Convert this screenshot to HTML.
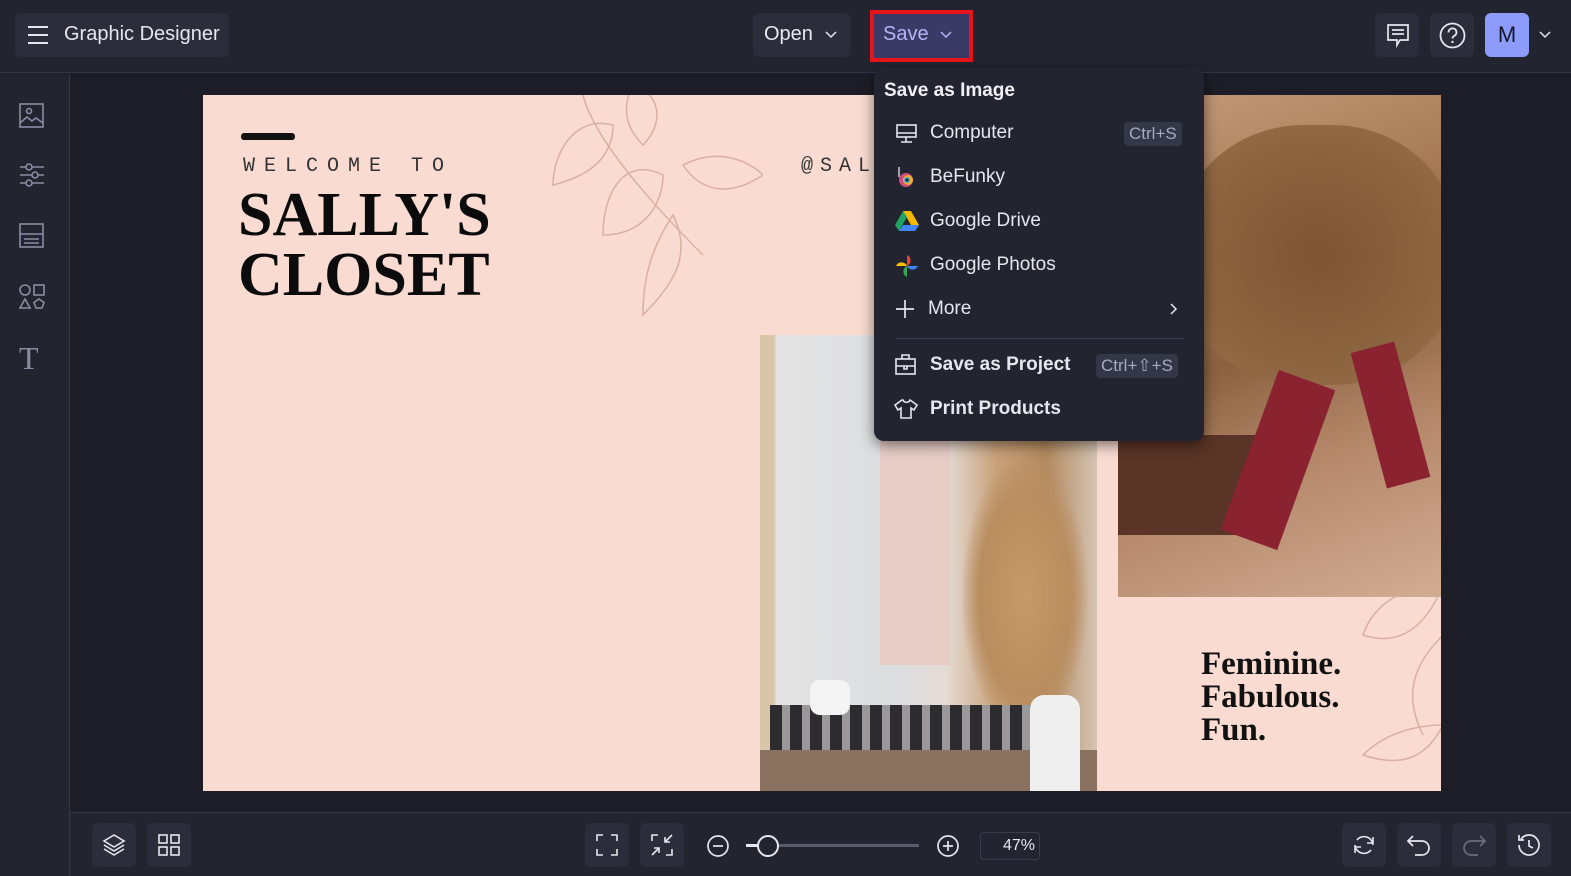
<!DOCTYPE html>
<html><head><meta charset="utf-8"><style>
*{margin:0;padding:0;box-sizing:border-box}
body{width:1571px;height:876px;background:#1c1d26;font-family:"Liberation Sans",sans-serif;position:relative;overflow:hidden;color:#e8e9f0}
.abs{position:absolute}
.top{left:0;top:0;width:1571px;height:73px;background:#22242f;border-bottom:1px solid #33354a}
.btn{position:absolute;background:#2b2d3a;border-radius:6px}
.side{left:0;top:74px;width:70px;height:802px;background:#22242f;border-right:1px solid #33354a}
.bottom{left:70px;top:812px;width:1501px;height:64px;background:#22242f;border-top:1px solid #33354a}
svg{position:absolute}
.menu{left:874px;top:68px;width:330px;height:373px;background:#22242f;border-radius:10px;box-shadow:0 4px 14px rgba(0,0,0,.5)}
.mi{position:absolute;left:56px;font-size:19px;color:#e6e7ee}
.kbd{position:absolute;background:#343747;color:#a8abbd;font-size:17px;border-radius:4px;padding:2px 5px}
</style></head><body>
<div class="abs top"></div>
<div class="btn" style="left:15px;top:13px;width:214px;height:44px"></div>
<svg style="left:27px;top:24px" width="22" height="22"><path d="M1 3h20M1 11h20M1 19h20" stroke="#e6e7ee" stroke-width="2"/></svg>
<div class="abs" style="left:64px;top:23px;font-size:20px;color:#e6e7ee">Graphic Designer</div>
<div class="btn" style="left:753px;top:13px;width:98px;height:44px"></div>
<div class="abs" style="left:764px;top:23px;font-size:20px">Open</div>
<svg style="left:825px;top:31px" width="12" height="8"><path d="M1 1l5 5 5-5" stroke="#e6e7ee" fill="none" stroke-width="1.5"/></svg>
<div class="abs" style="left:870px;top:10px;width:103px;height:52px;border:4px solid #e8141b;background:#3b3a66"></div>
<div class="abs" style="left:883px;top:23px;font-size:20px;color:#b3b6f5">Save</div>
<svg style="left:940px;top:31px" width="12" height="8"><path d="M1 1l5 5 5-5" stroke="#b3b6f5" fill="none" stroke-width="1.5"/></svg>
<div class="btn" style="left:1375px;top:13px;width:44px;height:44px"></div>
<svg style="left:1386px;top:23px" width="24" height="26"><path d="M2 2h20v15h-8l-3 5v-5H2z M6 7h12M6 11h12" stroke="#e6e7ee" fill="none" stroke-width="1.7"/></svg>
<div class="btn" style="left:1430px;top:13px;width:44px;height:44px"></div>
<svg style="left:1439px;top:22px" width="27" height="27"><circle cx="13.5" cy="13.5" r="12" stroke="#e6e7ee" fill="none" stroke-width="1.8"/><path d="M9.5 10.5a4 4 0 1 1 5.5 3.5c-1 .5-1.5 1.2-1.5 2.5" stroke="#e6e7ee" fill="none" stroke-width="1.8"/><circle cx="13.5" cy="20" r="1.2" fill="#e6e7ee"/></svg>
<div class="abs" style="left:1485px;top:13px;width:44px;height:44px;background:#8d9cfb;border-radius:6px;color:#16182a;font-size:22px;text-align:center;line-height:44px">M</div>
<svg style="left:1539px;top:31px" width="12" height="8"><path d="M1 1l5 5 5-5" stroke="#e6e7ee" fill="none" stroke-width="1.5"/></svg>

<div class="abs side"></div>
<svg style="left:19px;top:103px" width="26" height="26" fill="none" stroke="#8a8ca4" stroke-width="1.6"><rect x="1" y="1" width="23" height="23"/><circle cx="10" cy="8" r="2.5"/><path d="M1 20l7-6 5 4 4-3 7 5"/></svg>
<svg style="left:19px;top:162px" width="26" height="26" fill="none" stroke="#8a8ca4" stroke-width="1.6"><path d="M1 5h24M1 13h24M1 21h24"/><circle cx="10" cy="5" r="3" fill="#22242f"/><circle cx="16" cy="13" r="3" fill="#22242f"/><circle cx="10" cy="21" r="3" fill="#22242f"/></svg>
<svg style="left:19px;top:223px" width="26" height="26" fill="none" stroke="#8a8ca4" stroke-width="1.6"><rect x="1" y="1" width="23" height="23"/><path d="M1 11h23M5 16h15M5 20h15"/></svg>
<svg style="left:18px;top:283px" width="28" height="28" fill="none" stroke="#8a8ca4" stroke-width="1.6"><circle cx="7" cy="7" r="5"/><rect x="16" y="2" width="10" height="10"/><path d="M2 25l5-9 5 9z M21 16l5 3.5-2 5.5h-6l-2-5.5z"/></svg>
<div class="abs" style="left:19px;top:340px;font-family:'Liberation Serif',serif;font-size:32px;color:#8a8ca4;font-weight:300">T</div>

<!-- canvas -->
<div class="abs" style="left:203px;top:95px;width:1238px;height:696px;background:#f9dbd1;overflow:hidden">
 <svg style="left:320px;top:0" width="240" height="230" fill="none" stroke="#d9afa3" stroke-width="1.5"><path d="M60 0c10 40 60 100 120 160 M90 30c-40 -10-60 30-60 60 40-10 60-30 60-60z M140 80c-40-20-60 20-60 60 40 0 60-30 60-60z M160 70c40-20 70 0 80 10-30 20-60 20-80-10z M150 120c20 40 0 70-30 100 0-40 10-70 30-100z M110 -10c30 10 30 40 10 60-20-20-20-40-10-60z"/></svg>
 <svg style="left:1140px;top:480px" width="100" height="220" fill="none" stroke="#d9afa3" stroke-width="1.5"><path d="M100 10c-40 0-70 20-80 50 30 10 60 0 80-50z M100 150c-30 0-60 10-80 30 30 10 60 10 80-30z M100 60c-30 30-40 60-20 100"/></svg>
 <div class="abs" style="left:38px;top:38px;width:54px;height:7px;background:#111;border-radius:3px"></div>
 <div class="abs" style="left:40px;top:60px;font-family:'Liberation Mono',monospace;font-size:20px;letter-spacing:9px;color:#333">WELCOME TO</div>
 <div class="abs" style="left:598px;top:60px;font-family:'Liberation Mono',monospace;font-size:20px;letter-spacing:7px;color:#333">@SALLY</div>
 <div class="abs" style="left:35px;top:90px;font-family:'Liberation Serif',serif;font-weight:bold;font-size:62px;line-height:60px;color:#0b0b0b">SALLY'S<br>CLOSET</div>
 <div class="abs" style="left:557px;top:240px;width:337px;height:456px;background:linear-gradient(90deg,#d9c6a8 0,#d9c6a8 4%,#e4e4e4 5%,#dcdde0 40%,#e6dcd6 55%,#c9a27a 70%,#b38a60 85%,#d5c4b4 100%)">
  <div class="abs" style="left:120px;top:90px;width:70px;height:240px;background:#e8cbc3;opacity:.9"></div>
  <div class="abs" style="left:200px;top:120px;width:130px;height:280px;background:radial-gradient(ellipse at center,#c79a68,#b98d5f 50%,transparent 70%)"></div>
  <div class="abs" style="left:10px;top:370px;width:280px;height:45px;background:repeating-linear-gradient(90deg,#2c2c2e 0 12px,#9a9898 12px 20px)"></div>
  <div class="abs" style="left:50px;top:345px;width:40px;height:35px;background:#f4f4f4;border-radius:10px"></div>
  <div class="abs" style="left:0;top:415px;width:337px;height:41px;background:#8b7160"></div>
  <div class="abs" style="left:270px;top:360px;width:50px;height:96px;background:#efefef;border-radius:14px 14px 0 0"></div>
 </div>
 <div class="abs" style="left:915px;top:0;width:323px;height:502px;background:linear-gradient(160deg,#c79c7c 0%,#a57a55 30%,#8a6240 50%,#b58769 70%,#d1ad94 100%);overflow:hidden">
  <div class="abs" style="left:60px;top:30px;width:280px;height:260px;border-radius:45%;background:radial-gradient(ellipse,#7d5533,#8d6440 60%,#9c7350)"></div>
  <div class="abs" style="left:0;top:340px;width:140px;height:100px;background:#5a3426"></div>
  <div class="abs" style="left:130px;top:280px;width:60px;height:170px;background:#8a2230;transform:rotate(20deg)"></div>
  <div class="abs" style="left:250px;top:250px;width:45px;height:140px;background:#8a2230;transform:rotate(-15deg)"></div>
 </div>
 <div class="abs" style="left:998px;top:553px;font-family:'Liberation Serif',serif;font-weight:bold;font-size:33px;line-height:33px;color:#111">Feminine.<br>Fabulous.<br>Fun.</div>
</div>

<!-- menu -->
<div class="abs menu">
 <div class="abs" style="left:10px;top:12px;font-size:19px;font-weight:bold;color:#f0f0f5">Save as Image</div>
 <svg style="left:22px;top:55px" width="22" height="22" fill="none" stroke="#e6e7ee" stroke-width="1.6"><rect x="1" y="2" width="19" height="12"/><path d="M1 10h19M10 14v5M5 19h11"/></svg>
 <div class="mi" style="top:54px">Computer</div><div class="kbd" style="left:250px;top:54px">Ctrl+S</div>
 <svg style="left:22px;top:99px" width="22" height="22"><path d="M3 0v10" stroke="#e6e7ee" stroke-width="1.3"/><circle cx="10" cy="13" r="7" fill="#d4497f"/><circle cx="12" cy="13" r="5" fill="#f0b030"/><circle cx="11" cy="13" r="3" fill="#3ba4d8"/><circle cx="11" cy="13" r="1.5" fill="#222"/></svg>
 <div class="mi" style="top:98px">BeFunky</div>
 <svg style="left:21px;top:142px" width="24" height="22"><path d="M8 1h8l8 14h-8z" fill="#f6b900"/><path d="M8 1l-8 14 4 6 8-14z" fill="#1fa463"/><path d="M4 21h16l4-6H8z" fill="#4285f4"/></svg>
 <div class="mi" style="top:142px">Google Drive</div>
 <svg style="left:21px;top:186px" width="24" height="24"><path d="M12 12V1a6 6 0 0 1 0 11z" fill="#ea4335"/><path d="M12 12H23a6 6 0 0 1-11 0z" fill="#4285f4"/><path d="M12 12v11a6 6 0 0 1 0-11z" fill="#34a853"/><path d="M12 12H1a6 6 0 0 1 11 0z" fill="#fbbc04"/></svg>
 <div class="mi" style="top:186px">Google Photos</div>
 <svg style="left:21px;top:231px" width="20" height="20"><path d="M10 1v18M1 10h18" stroke="#e6e7ee" stroke-width="1.7"/></svg>
 <div class="mi" style="top:230px;left:54px">More</div>
 <svg style="left:296px;top:235px" width="8" height="12"><path d="M1 1l5 5-5 5" stroke="#e6e7ee" fill="none" stroke-width="1.5"/></svg>
 <div class="abs" style="left:22px;top:270px;width:288px;height:1px;background:#3a3c4d"></div>
 <svg style="left:21px;top:286px" width="22" height="22" fill="none" stroke="#e6e7ee" stroke-width="1.6"><rect x="1" y="5" width="19" height="15"/><path d="M7 5V1h7v4M1 12h19M9 12v3h3v-3"/></svg>
 <div class="mi" style="top:286px;font-weight:bold">Save as Project</div><div class="kbd" style="left:222px;top:286px">Ctrl+⇧+S</div>
 <svg style="left:20px;top:330px" width="24" height="22" fill="none" stroke="#e6e7ee" stroke-width="1.6"><path d="M8 2l-7 5 3 5 3-2v10h10V10l3 2 3-5-7-5c-1 3-6 3-7 0z"/></svg>
 <div class="mi" style="top:330px;font-weight:bold">Print Products</div>
</div>

<!-- bottom -->
<div class="abs bottom"></div>
<div class="btn" style="left:92px;top:823px;width:44px;height:44px"></div>
<svg style="left:102px;top:833px" width="24" height="24" fill="none" stroke="#e6e7ee" stroke-width="1.6"><path d="M12 2l10 6-10 6-10-6z M2 12l10 6 10-6 M2 16l10 6 10-6"/></svg>
<div class="btn" style="left:147px;top:823px;width:44px;height:44px"></div>
<svg style="left:158px;top:834px" width="22" height="22" fill="none" stroke="#e6e7ee" stroke-width="1.6"><rect x="1" y="1" width="8" height="8"/><rect x="13" y="1" width="8" height="8"/><rect x="1" y="13" width="8" height="8"/><rect x="13" y="13" width="8" height="8"/></svg>
<div class="btn" style="left:585px;top:823px;width:44px;height:44px"></div>
<svg style="left:596px;top:834px" width="22" height="22" fill="none" stroke="#e6e7ee" stroke-width="1.6"><path d="M1 7V1h6M15 1h6v6M21 15v6h-6M7 21H1v-6"/></svg>
<div class="btn" style="left:640px;top:823px;width:44px;height:44px"></div>
<svg style="left:651px;top:834px" width="22" height="22" fill="none" stroke="#e6e7ee" stroke-width="1.6"><path d="M1 7V1h6M21 1l-7 7M14 3v5h5M15 21h6v-6M1 21l7-7M3 14h5v5"/></svg>
<svg style="left:706px;top:834px" width="24" height="24" fill="none" stroke="#e6e7ee" stroke-width="1.7"><circle cx="12" cy="12" r="10"/><path d="M7 12h10"/></svg>
<div class="abs" style="left:746px;top:844px;width:173px;height:3px;background:#5a5c6e"></div>
<div class="abs" style="left:746px;top:844px;width:14px;height:3px;background:#e6e7ee"></div>
<div class="abs" style="left:757px;top:835px;width:22px;height:22px;border-radius:50%;border:2px solid #e6e7ee;background:#22242f"></div>
<svg style="left:936px;top:834px" width="24" height="24" fill="none" stroke="#e6e7ee" stroke-width="1.7"><circle cx="12" cy="12" r="10"/><path d="M7 12h10M12 7v10"/></svg>
<div class="abs" style="left:980px;top:832px;width:60px;height:28px;border:1px solid #3a3c4d;border-radius:4px;text-align:right;padding-right:4px;line-height:26px;font-size:16px">47%</div>
<div class="btn" style="left:1342px;top:823px;width:44px;height:44px"></div>
<svg style="left:1353px;top:834px" width="22" height="22" fill="none" stroke="#e6e7ee" stroke-width="1.6"><path d="M4 6a9 9 0 0 1 16 5M18 16a9 9 0 0 1-16-5M20 3v6h-6M2 19v-6h6"/></svg>
<div class="btn" style="left:1397px;top:823px;width:44px;height:44px"></div>
<svg style="left:1407px;top:834px" width="24" height="22" fill="none" stroke="#e6e7ee" stroke-width="1.7"><path d="M6 2L1 7l5 5M1 7h14a7 7 0 0 1 0 14H8"/></svg>
<div class="btn" style="left:1452px;top:823px;width:44px;height:44px"></div>
<svg style="left:1462px;top:834px" width="24" height="22" fill="none" stroke="#6a6c7c" stroke-width="1.7"><path d="M18 2l5 5-5 5M23 7H9a7 7 0 0 0 0 14h7"/></svg>
<div class="btn" style="left:1507px;top:823px;width:44px;height:44px"></div>
<svg style="left:1517px;top:833px" width="24" height="24" fill="none" stroke="#e6e7ee" stroke-width="1.7"><path d="M4 6a10 10 0 1 1-2 6M2 2v5h5M12 7v6l4 2"/></svg>
</body></html>
